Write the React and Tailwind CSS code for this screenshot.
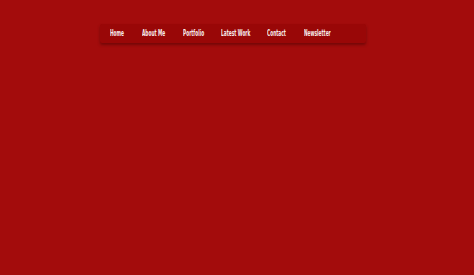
const items = [
  { label: 'Home', w: 'w-[32px]' },
  { label: 'About Me', w: 'w-[41px]' },
  { label: 'Portfolio', w: 'w-[38px]' },
  { label: 'Latest Work', w: 'w-[46px]' },
  { label: 'Contact', w: 'w-[37px]' },
  { label: 'Newsletter', w: 'w-[40px]' },
];

export default function App() {
  return (
    <div className="min-h-[275px] w-full bg-[#a30c0c] pt-[24px]">
      <nav className="ml-[100px] flex h-[19px] w-[266px] items-center rounded-[2px] bg-[#990707] pl-[10px] shadow-[0_2px_3px_rgba(60,0,0,0.45)]">
        {items.map((item) => (
          <a key={item.label} href="#" className={`${item.w} flex h-full items-center whitespace-nowrap`}>
            <span
              className="block origin-left scale-x-[0.6] text-[8px] font-bold leading-[8px] text-[#f7ecec]"
              style={{ fontFamily: '"DejaVu Sans Condensed", sans-serif' }}
            >
              {item.label}
            </span>
          </a>
        ))}
      </nav>
    </div>
  );
}
